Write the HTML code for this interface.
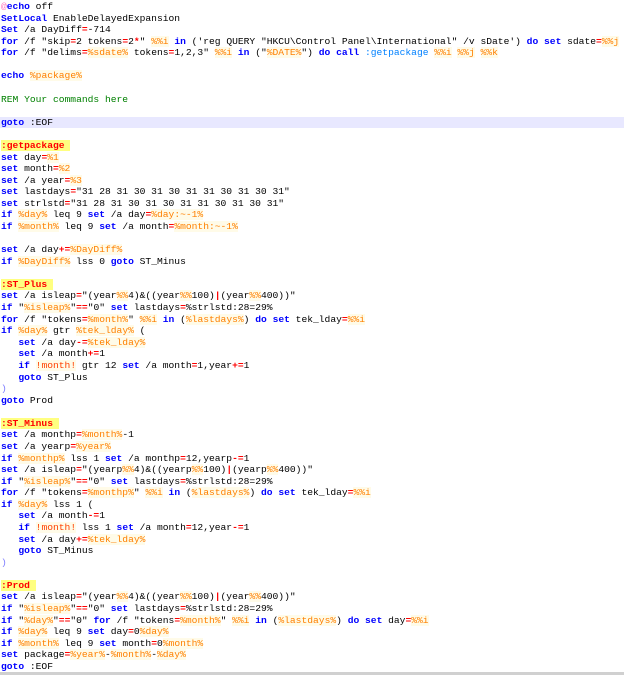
<!DOCTYPE html>
<html><head><meta charset="utf-8"><style>
html,body{margin:0;padding:0;background:#fff;width:624px;height:675px;overflow:hidden}
#c{position:absolute;left:1px;top:1px;font-family:"Liberation Mono",monospace;font-size:9.65px;color:#000}
.l{height:11.58px;line-height:11.58px;white-space:pre}
.cur{background:#e8e8ff;margin-left:-1px;padding-left:1px;width:624px}
.k{color:#0000ff;font-weight:bold}
.v{color:#ff8000;background:#fffbe8}
.o{color:#ff0000;font-weight:bold}
.lb{color:#ff0000;background:#ffff80;font-weight:bold}
.c{color:#008000}
.p{color:#8080ff}
.at{color:#ff80c0}
#bot{position:absolute;left:0;top:672px;width:624px;height:3px;background:#d0d0d0}
</style></head><body><div id="c">
<div class="l"><span class="at">@</span><span class="k">echo</span> off</div>
<div class="l"><span class="k">SetLocal</span> EnableDelayedExpansion</div>
<div class="l"><span class="k">Set</span> /a DayDiff<span class="o">=</span>-714</div>
<div class="l"><span class="k">for</span> /f "skip<span class="o">=</span>2 tokens<span class="o">=</span>2<span class="o">*</span>" <span class="v">%%i</span> <span class="k">in</span> ('reg QUERY "HKCU\Control Panel\International" /v sDate') <span class="k">do</span> <span class="k">set</span> sdate<span class="o">=</span><span class="v">%%j</span></div>
<div class="l"><span class="k">for</span> /f "delims<span class="o">=</span><span class="v">%sdate%</span> tokens<span class="o">=</span>1,2,3" <span class="v">%%i</span> <span class="k">in</span> ("<span class="v">%DATE%</span>") <span class="k">do</span> <span class="k">call</span> <span style="color:#0080ff">:getpackage</span> <span class="v">%%i</span> <span class="v">%%j</span> <span class="v">%%k</span></div>
<div class="l"> </div>
<div class="l"><span class="k">echo</span> <span class="v">%package%</span></div>
<div class="l"> </div>
<div class="l"><span class="c">REM Your commands here</span></div>
<div class="l"> </div>
<div class="l cur"><span class="k">goto</span> :EOF</div>
<div class="l"> </div>
<div class="l"><span class="lb">:getpackage </span></div>
<div class="l"><span class="k">set</span> day<span class="o">=</span><span class="v">%1</span></div>
<div class="l"><span class="k">set</span> month<span class="o">=</span><span class="v">%2</span></div>
<div class="l"><span class="k">set</span> /a year<span class="o">=</span><span class="v">%3</span></div>
<div class="l"><span class="k">set</span> lastdays<span class="o">=</span>"31 28 31 30 31 30 31 31 30 31 30 31"</div>
<div class="l"><span class="k">set</span> strlstd<span class="o">=</span>"31 28 31 30 31 30 31 31 30 31 30 31"</div>
<div class="l"><span class="k">if</span> <span class="v">%day%</span> leq 9 <span class="k">set</span> /a day<span class="o">=</span><span class="v">%day:~-1%</span></div>
<div class="l"><span class="k">if</span> <span class="v">%month%</span> leq 9 <span class="k">set</span> /a month<span class="o">=</span><span class="v">%month:~-1%</span></div>
<div class="l"> </div>
<div class="l"><span class="k">set</span> /a day<span class="o">+=</span><span class="v">%DayDiff%</span></div>
<div class="l"><span class="k">if</span> <span class="v">%DayDiff%</span> lss 0 <span class="k">goto</span> ST_Minus</div>
<div class="l"> </div>
<div class="l"><span class="lb">:ST_Plus </span></div>
<div class="l"><span class="k">set</span> /a isleap<span class="o">=</span>"(year<span class="v">%%</span>4)&amp;((year<span class="v">%%</span>100)<span class="o">|</span>(year<span class="v">%%</span>400))"</div>
<div class="l"><span class="k">if</span> "<span class="v">%isleap%</span>"<span class="o">==</span>"0" <span class="k">set</span> lastdays<span class="o">=</span>%strlstd:28=29%</div>
<div class="l"><span class="k">for</span> /f "tokens<span class="o">=</span><span class="v">%month%</span>" <span class="v">%%i</span> <span class="k">in</span> (<span class="v">%lastdays%</span>) <span class="k">do</span> <span class="k">set</span> tek_lday<span class="o">=</span><span class="v">%%i</span></div>
<div class="l"><span class="k">if</span> <span class="v">%day%</span> gtr <span class="v">%tek_lday%</span> (</div>
<div class="l">   <span class="k">set</span> /a day<span class="o">-=</span><span class="v">%tek_lday%</span></div>
<div class="l">   <span class="k">set</span> /a month<span class="o">+=</span>1</div>
<div class="l">   <span class="k">if</span> <span class="v" style="color:#ff4000">!month!</span> gtr 12 <span class="k">set</span> /a month<span class="o">=</span>1,year<span class="o">+=</span>1</div>
<div class="l">   <span class="k">goto</span> ST_Plus</div>
<div class="l"><span class="p">)</span></div>
<div class="l"><span class="k">goto</span> Prod</div>
<div class="l"> </div>
<div class="l"><span class="lb">:ST_Minus </span></div>
<div class="l"><span class="k">set</span> /a monthp<span class="o">=</span><span class="v">%month%</span>-1</div>
<div class="l"><span class="k">set</span> /a yearp<span class="o">=</span><span class="v">%year%</span></div>
<div class="l"><span class="k">if</span> <span class="v">%monthp%</span> lss 1 <span class="k">set</span> /a monthp<span class="o">=</span>12,yearp<span class="o">-=</span>1</div>
<div class="l"><span class="k">set</span> /a isleap<span class="o">=</span>"(yearp<span class="v">%%</span>4)&amp;((yearp<span class="v">%%</span>100)<span class="o">|</span>(yearp<span class="v">%%</span>400))"</div>
<div class="l"><span class="k">if</span> "<span class="v">%isleap%</span>"<span class="o">==</span>"0" <span class="k">set</span> lastdays<span class="o">=</span>%strlstd:28=29%</div>
<div class="l"><span class="k">for</span> /f "tokens<span class="o">=</span><span class="v">%monthp%</span>" <span class="v">%%i</span> <span class="k">in</span> (<span class="v">%lastdays%</span>) <span class="k">do</span> <span class="k">set</span> tek_lday<span class="o">=</span><span class="v">%%i</span></div>
<div class="l"><span class="k">if</span> <span class="v">%day%</span> lss 1 (</div>
<div class="l">   <span class="k">set</span> /a month<span class="o">-=</span>1</div>
<div class="l">   <span class="k">if</span> <span class="v" style="color:#ff4000">!month!</span> lss 1 <span class="k">set</span> /a month<span class="o">=</span>12,year<span class="o">-=</span>1</div>
<div class="l">   <span class="k">set</span> /a day<span class="o">+=</span><span class="v">%tek_lday%</span></div>
<div class="l">   <span class="k">goto</span> ST_Minus</div>
<div class="l"><span class="p">)</span></div>
<div class="l"> </div>
<div class="l"><span class="lb">:Prod </span></div>
<div class="l"><span class="k">set</span> /a isleap<span class="o">=</span>"(year<span class="v">%%</span>4)&amp;((year<span class="v">%%</span>100)<span class="o">|</span>(year<span class="v">%%</span>400))"</div>
<div class="l"><span class="k">if</span> "<span class="v">%isleap%</span>"<span class="o">==</span>"0" <span class="k">set</span> lastdays<span class="o">=</span>%strlstd:28=29%</div>
<div class="l"><span class="k">if</span> "<span class="v">%day%</span>"<span class="o">==</span>"0" <span class="k">for</span> /f "tokens<span class="o">=</span><span class="v">%month%</span>" <span class="v">%%i</span> <span class="k">in</span> (<span class="v">%lastdays%</span>) <span class="k">do</span> <span class="k">set</span> day<span class="o">=</span><span class="v">%%i</span></div>
<div class="l"><span class="k">if</span> <span class="v">%day%</span> leq 9 <span class="k">set</span> day<span class="o">=</span>0<span class="v">%day%</span></div>
<div class="l"><span class="k">if</span> <span class="v">%month%</span> leq 9 <span class="k">set</span> month<span class="o">=</span>0<span class="v">%month%</span></div>
<div class="l"><span class="k">set</span> package<span class="o">=</span><span class="v">%year%</span>-<span class="v">%month%</span>-<span class="v">%day%</span></div>
<div class="l"><span class="k">goto</span> :EOF</div>
</div><div id="bot"></div></body></html>
